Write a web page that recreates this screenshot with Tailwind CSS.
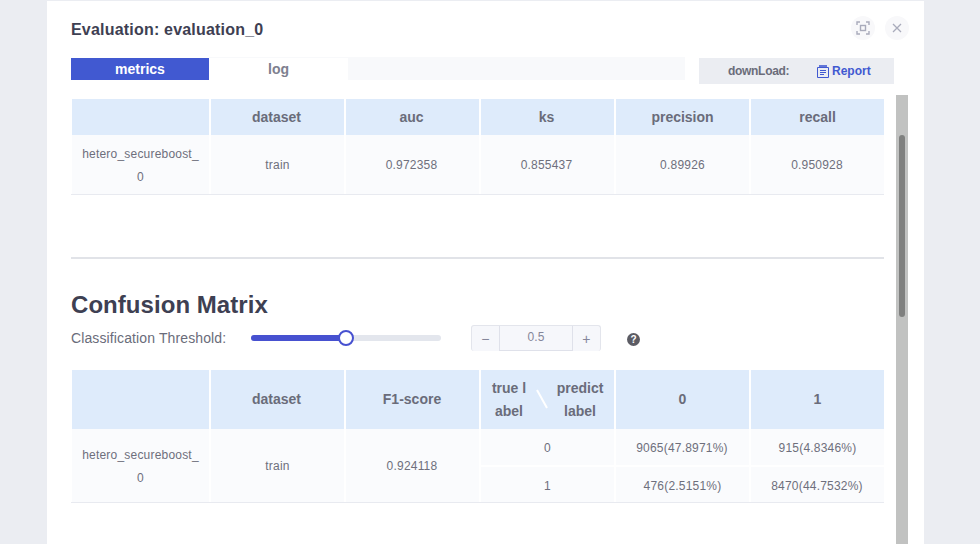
<!DOCTYPE html>
<html lang="en">
<head>
  <meta charset="UTF-8">
  <title>Evaluation</title>
  <script src="https://cdn.jsdelivr.net/npm/@tailwindcss/browser@4"></script>
</head>
<body class="bg-[#ebedf2] h-[544px] overflow-hidden font-['Liberation_Sans',sans-serif]">
  <div class="relative ml-[47px] mt-px w-[877px] h-[543px] bg-white overflow-hidden">
    <!-- header -->
    <div class="h-[56px] pl-6 pr-[15px] flex justify-between">
      <h1 class="mt-5 text-base leading-[18px] tracking-[.2px] font-bold text-[#3e4052]">Evaluation: evaluation_0</h1>
      <div class="flex gap-[10px] mt-[15px]">
        <div class="w-6 h-6 rounded-full bg-[#f8f8fa] flex items-center justify-center">
          <svg width="14" height="14" viewBox="0 0 14 14" fill="none" stroke="#a9abbb" stroke-width="1.4">
            <path d="M1 4V1h3M10 1h3v3M13 10v3h-3M4 13H1v-3"/>
            <rect x="4.5" y="4.5" width="5" height="5"/>
          </svg>
        </div>
        <div class="w-6 h-6 rounded-full bg-[#f8f8fa] flex items-center justify-center">
          <svg width="10" height="10" viewBox="0 0 10 10" fill="none" stroke="#a9abbb" stroke-width="1.3">
            <path d="M1 1l8 8M9 1l-8 8"/>
          </svg>
        </div>
      </div>
    </div>

    <!-- tabs -->
    <div class="h-[38px] pl-6 flex items-start">
      <div class="w-[138px] h-[22px] mt-px bg-[#4159d1] text-white text-sm font-bold leading-[22px] text-center">metrics</div>
      <div class="w-[139px] h-[23px] border-t border-[#f8f9fb] text-[#7e7f8f] text-sm font-bold leading-[22px] text-center">log</div>
      <div class="w-[337px] h-[23px] bg-[#f8f9fb]"></div>
      <div class="ml-[14px] mt-px w-[195px] h-[26px] bg-[#ebedf2] flex items-center text-xs font-bold">
        <span class="ml-[29px] w-[62px] whitespace-nowrap tracking-[-.3px] text-[#6a6c7a]">downLoad:</span>
        <svg class="ml-[27px]" width="12" height="13" viewBox="0 0 12 13" fill="none" stroke="#4159d1" stroke-width="1">
          <path d="M.5 2.5h11v10H.5z"/>
          <path d="M2 1h8" stroke-width="1.6"/>
          <path d="M3 5.5h6M3 7.5h6M3 9.5h4"/>
        </svg>
        <span class="ml-[3px] text-[#4159d1]">Report</span>
      </div>
    </div>

    <!-- content -->
    <div class="relative h-[449px] pl-6 pt-1">
      <div class="w-[813px]">
        <div class="ml-px grid grid-cols-[139px_135px_135px_135px_135px_133px] h-9 text-sm font-bold text-[#6a6c7a]">
          <div class="bg-[#deebfb] border-r-2 border-white"></div>
          <div class="bg-[#deebfb] border-r-2 border-white pr-0.5 flex items-center justify-center">dataset</div>
          <div class="bg-[#deebfb] border-r-2 border-white pr-0.5 flex items-center justify-center">auc</div>
          <div class="bg-[#deebfb] border-r-2 border-white pr-0.5 flex items-center justify-center">ks</div>
          <div class="bg-[#deebfb] border-r-2 border-white flex items-center justify-center">precision</div>
          <div class="bg-[#deebfb] flex items-center justify-center">recall</div>
        </div>
        <div class="pl-px border-b border-[#e8eaf0]">
          <div class="grid grid-cols-[139px_135px_135px_135px_135px_133px] h-[59px] text-xs tracking-[.2px] text-[#6e6f7c] text-center">
            <div class="bg-[#fafbfd] border-r-2 border-white flex items-center justify-center leading-[23px] pt-[3px]">hetero_secureboost_<br>0</div>
            <div class="bg-[#fafbfd] border-r-2 border-white flex items-center justify-center">train</div>
            <div class="bg-[#fafbfd] border-r-2 border-white pr-0.5 flex items-center justify-center">0.972358</div>
            <div class="bg-[#fafbfd] border-r-2 border-white pr-0.5 flex items-center justify-center">0.855437</div>
            <div class="bg-[#fafbfd] border-r-2 border-white flex items-center justify-center">0.89926</div>
            <div class="bg-[#fafbfd] pr-px flex items-center justify-center">0.950928</div>
          </div>
        </div>
      </div>

      <div class="w-[813px] h-0.5 mt-[62px] bg-[#e1e3e8]"></div>

      <h2 class="mt-8 text-2xl leading-7 tracking-[.05px] font-bold text-[#3e4052]">Confusion Matrix</h2>

      <div class="mt-1.5 h-[26px] flex items-center text-sm tracking-[.12px] text-[#6a6c7a]">
        <span class="w-[180px]">Classification Threshold:</span>
        <div class="relative w-[190px] h-1.5 rounded-full bg-[#e3e6ed]">
          <div class="w-[95px] h-1.5 rounded-full bg-[#4751d0]"></div>
          <div class="absolute left-[87px] -top-[5px] w-4 h-4 rounded-full bg-white border-2 border-[#4751d0]"></div>
        </div>
        <div class="ml-[30px] w-[130px] h-[26px] flex bg-[#f6f7fb] rounded-[3px] border-x border-t border-[#e3e5ec] text-[#85869a]">
          <div class="w-[27px] flex items-center justify-center text-sm">−</div>
          <div class="w-[74px] h-[25px] border-x border-b border-[#dfe1ea] text-xs leading-[22px] text-center text-[#85869a]">0.5</div>
          <div class="w-[27px] flex items-center justify-center text-sm">+</div>
        </div>
        <div class="ml-[26px] mt-0.5 w-[13px] h-[13px] rounded-full bg-[#5c5c64] text-white text-[10px] font-bold leading-[13px] text-center">?</div>
      </div>

      <div class="w-[813px] mt-[19px]">
        <div class="ml-px grid grid-cols-[139px_135px_135px_135px_135px_133px] h-[59px] text-sm font-bold text-[#6a6c7a]">
          <div class="bg-[#deebfb] border-r-2 border-white"></div>
          <div class="bg-[#deebfb] border-r-2 border-white pr-0.5 pb-px flex items-center justify-center">dataset</div>
          <div class="bg-[#deebfb] border-r-2 border-white pr-px pb-px flex items-center justify-center">F1-score</div>
          <div class="relative bg-[#deebfb] border-r-2 border-white flex justify-between pl-2 pr-[9px] text-center leading-[23px] pt-[7px]">
            <span class="w-[40px]">true l<br>abel</span>
            <span class="w-[50px]">predict<br>label</span>
            <svg class="absolute left-[55px] top-[19px]" width="13" height="20" viewBox="0 0 13 20">
              <path d="M1 1l10 18" stroke="#fff" stroke-width="2"/>
            </svg>
          </div>
          <div class="bg-[#deebfb] border-r-2 border-white pb-px flex items-center justify-center">0</div>
          <div class="bg-[#deebfb] pb-px flex items-center justify-center">1</div>
        </div>
        <div class="pl-px border-b border-[#e8eaf0]">
          <div class="grid grid-cols-[139px_135px_135px_135px_135px_133px] grid-rows-[36px_35px] gap-y-0.5 text-xs tracking-[.2px] text-[#6e6f7c] text-center">
            <div class="row-span-2 bg-[#fafbfd] border-r-2 border-white flex items-center justify-center leading-[23px] pt-[3px]">hetero_secureboost_<br>0</div>
            <div class="row-span-2 bg-[#fafbfd] border-r-2 border-white flex items-center justify-center">train</div>
            <div class="row-span-2 bg-[#fafbfd] border-r-2 border-white pr-px flex items-center justify-center">0.924118</div>
            <div class="bg-[#fafbfd] border-r-2 border-white pt-0.5 flex items-center justify-center">0</div>
            <div class="bg-[#fafbfd] border-r-2 border-white pt-0.5 pr-px flex items-center justify-center">9065(47.8971%)</div>
            <div class="bg-[#fafbfd] pt-0.5 flex items-center justify-center">915(4.8346%)</div>
            <div class="bg-[#fafbfd] border-r-2 border-white pt-0.5 flex items-center justify-center">1</div>
            <div class="bg-[#fafbfd] border-r-2 border-white pt-0.5 flex items-center justify-center">476(2.5151%)</div>
            <div class="bg-[#fafbfd] pt-0.5 pr-px flex items-center justify-center">8470(44.7532%)</div>
          </div>
        </div>
      </div>

      <!-- scrollbar -->
      <div class="absolute left-[849px] top-0 w-3 h-full bg-[#c1c2c1]">
        <div class="mx-[3px] mt-10 w-1.5 h-[182px] rounded-[3px] bg-[#7f807f]"></div>
      </div>
    </div>
  </div>
</body>
</html>
